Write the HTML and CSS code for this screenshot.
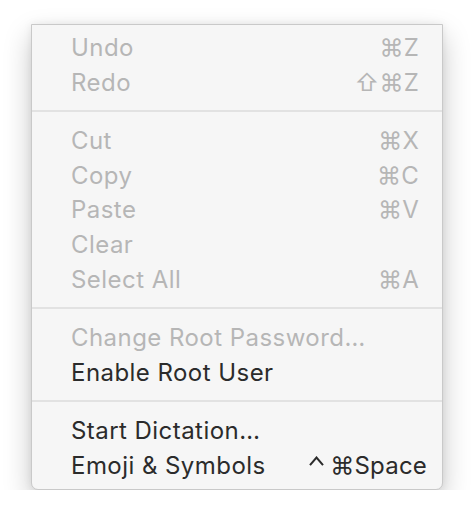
FILE: index.html
```html
<!DOCTYPE html>
<html lang="en">
<head>
<meta charset="utf-8">
<title>Edit menu</title>
<link rel="stylesheet" href="styles.css">
</head>
<body>
<div class="menu">
  <div class="item disabled"><span class="label">Undo</span><span class="key">⌘Z</span></div>
  <div class="item disabled"><span class="label">Redo</span><span class="key">⇧⌘Z</span></div>
  <div class="sep"></div>
  <div class="item disabled"><span class="label">Cut</span><span class="key">⌘X</span></div>
  <div class="item disabled"><span class="label">Copy</span><span class="key">⌘C</span></div>
  <div class="item disabled"><span class="label">Paste</span><span class="key">⌘V</span></div>
  <div class="item disabled"><span class="label">Clear</span><span class="key"></span></div>
  <div class="item disabled"><span class="label">Select All</span><span class="key">⌘A</span></div>
  <div class="sep"></div>
  <div class="item disabled"><span class="label">Change Root Password…</span><span class="key"></span></div>
  <div class="item"><span class="label">Enable Root User</span><span class="key"></span></div>
  <div class="sep"></div>
  <div class="item"><span class="label">Start Dictation…</span><span class="key"></span></div>
  <div class="item"><span class="label">Emoji &amp; Symbols</span><span class="key key-wide"><svg class="caret" width="15" height="10" viewBox="0 0 15 10" aria-label="Control"><polyline points="1,9.2 7.5,1.5 14,9.2" fill="none" stroke="currentColor" stroke-width="2" stroke-linejoin="miter"/></svg>⌘Space</span></div>
</div>
</body>
</html>
```
FILE: styles.css
```css
html, body {
  margin: 0;
  padding: 0;
  background: #ffffff;
}

body {
  padding: 24px 0 0 31px;
  font-family: "Inter", "DejaVu Sans", sans-serif;
}

.menu {
  width: 410px;
  height: 459px;
  background: #f6f6f6;
  border: 1px solid #c9c9c9;
  border-radius: 0 0 7px 7px;
  box-shadow: 0 12px 28px rgba(0, 0, 0, 0.22), 0 0 8px rgba(0, 0, 0, 0.07);
  padding-top: 5px;
  box-sizing: content-box;
}

.item {
  display: flex;
  justify-content: space-between;
  align-items: center;
  height: 34.7px;
  padding: 0 23px 0 39px;
  font-size: 24px;
  letter-spacing: 0.45px;
  color: #2b2b2b;
  white-space: nowrap;
}

.item.disabled {
  color: #b6b6b6;
}

.key {
  letter-spacing: 0.2px;
}

.key-wide {
  margin-right: -8px;
}

.caret {
  vertical-align: 7.5px;
  margin-right: 6px;
}

.sep {
  height: 2px;
  margin: 11px 0 10.6px;
  background: #e2e2e2;
}
```
